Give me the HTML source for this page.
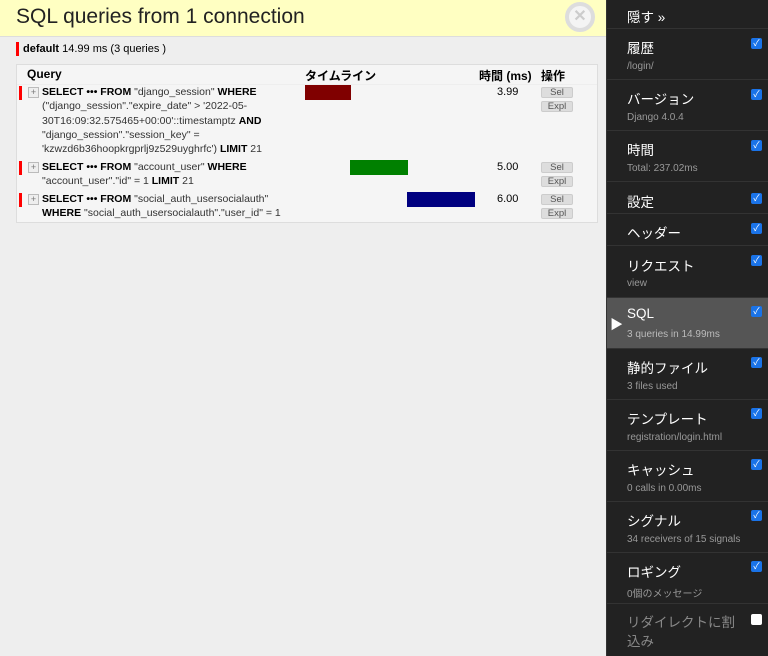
<!DOCTYPE html>
<html><head><meta charset="utf-8"><style>
*{box-sizing:border-box;margin:0;padding:0}
body{width:768px;height:656px;overflow:hidden;background:#eee;font-family:"Liberation Sans","Noto Sans CJK JP",sans-serif;font-size:11px;color:#000;position:relative}
#hd{position:absolute;left:0;top:0;width:606px;height:37px;background:#ffffc2;border-bottom:1px solid #ddd}
#hd h3{position:absolute;left:16px;top:5px;font-size:21px;font-weight:normal;color:#222}
#close{position:absolute;left:565px;top:2px;width:30px;height:30px;border-radius:50%;border:4px solid #ddd;background:#f4f4f4;color:#ccc;font-size:16px;text-align:center;line-height:22px;font-weight:bold}
#db{position:absolute;left:16px;top:42px;font-size:11px;border-left:3px solid red;padding-left:4px;line-height:14px}
#tbl{position:absolute;left:16px;top:64px;width:582px;height:159px;background:#f5f5f5;border:1px solid #ddd}
.th{position:absolute;top:2px;font-weight:bold;font-size:12px}
.q{position:absolute;left:2px;width:270px;line-height:14.3px;font-size:10.5px;color:#333;padding-left:23px}
.q b{color:#000}
.q .bar{position:absolute;left:0;top:1px;width:3px;height:14px;background:red}
.q .pl{position:absolute;left:9px;top:2px;width:11px;height:11px;border:1px solid #bbb;background:#eee;font-size:9px;line-height:9px;text-align:center;color:#777}
.tl{position:absolute;height:15px}
.ms{position:absolute;left:480px;width:24px;font-size:11px}
.btn{position:absolute;left:524px;width:32px;height:11px;background:#ddd;border:1px solid #ccc;border-radius:2px;font-size:9.5px;line-height:9px;text-align:center;color:#555}
#sb{position:absolute;left:606px;top:0;width:162px;height:656px;background:#222;border-left:1px solid #333}
.it{position:absolute;left:0;width:162px;border-bottom:1px solid #333;color:#fff}
.it .t{position:absolute;left:20px;font-size:13.5px}
.it .s{position:absolute;left:20px;font-size:10px;color:#999}
.cb{position:absolute;left:144px;width:11px;height:11px;background:#1a73e8;border-radius:2px;color:#fff;font-size:9px;line-height:11px;text-align:center}
.sel{background:#555}
</style></head><body>
<div id="hd"><h3>SQL queries from 1 connection</h3><div id="close">✕</div></div>
<div id="db"><b>default</b> 14.99 ms (3 queries )</div>
<div id="tbl">
<div class="th" style="left:10px">Query</div>
<div class="th" style="left:288px">タイムライン</div>
<div class="th" style="left:462px">時間 (ms)</div>
<div class="th" style="left:524px">操作</div>
<div style="position:absolute;left:0;top:19px;width:580px;height:1px;background:#eee"></div>
<div class="q" style="top:20px"><span class="bar"></span><span class="pl">+</span><b>SELECT ••• FROM</b> "django_session" <b>WHERE</b> ("django_session"."expire_date" &gt; '2022-05-30T16:09:32.575465+00:00'::timestamptz <b>AND</b> "django_session"."session_key" = 'kzwzd6b36hoopkrgprlj9z529uyghrfc') <b>LIMIT</b> 21</div>
<div class="tl" style="left:288px;top:20px;width:46px;background:#800000"></div>
<div class="ms" style="top:21px">3.99</div>
<div class="btn" style="top:22px">Sel</div><div class="btn" style="top:36px">Expl</div>
<div class="q" style="top:95px"><span class="bar"></span><span class="pl">+</span><b>SELECT ••• FROM</b> "account_user" <b>WHERE</b> "account_user"."id" = 1 <b>LIMIT</b> 21</div>
<div class="tl" style="left:333px;top:95px;width:58px;background:#008000"></div>
<div class="ms" style="top:96px">5.00</div>
<div class="btn" style="top:97px">Sel</div><div class="btn" style="top:111px">Expl</div>
<div class="q" style="top:127px;width:280px"><span class="bar"></span><span class="pl">+</span><b>SELECT ••• FROM</b> "social_auth_usersocialauth" <b>WHERE</b> "social_auth_usersocialauth"."user_id" = 1</div>
<div class="tl" style="left:390px;top:127px;width:68px;background:#000080"></div>
<div class="ms" style="top:128px">6.00</div>
<div class="btn" style="top:129px">Sel</div><div class="btn" style="top:143px">Expl</div>
</div>
<div id="sb">
<div class="it" style="top:0;height:29px"><span class="t" style="top:6px">隠す »</span></div>
<div class="it" style="top:29px;height:51px"><span class="t" style="top:8px">履歴</span><span class="s" style="top:32px">/login/</span><span class="cb" style="top:9px">✓</span></div>
<div class="it" style="top:80px;height:51px"><span class="t" style="top:8px">バージョン</span><span class="s" style="top:32px">Django 4.0.4</span><span class="cb" style="top:9px">✓</span></div>
<div class="it" style="top:131px;height:51px"><span class="t" style="top:8px">時間</span><span class="s" style="top:32px">Total: 237.02ms</span><span class="cb" style="top:9px">✓</span></div>
<div class="it" style="top:182px;height:32px"><span class="t" style="top:9px">設定</span><span class="cb" style="top:11px">✓</span></div>
<div class="it" style="top:214px;height:32px"><span class="t" style="top:8px">ヘッダー</span><span class="cb" style="top:9px">✓</span></div>
<div class="it" style="top:246px;height:52px"><span class="t" style="top:9px">リクエスト</span><span class="s" style="top:32px">view</span><span class="cb" style="top:9px">✓</span></div>
<div class="it sel" style="top:298px;height:51px"><span style="position:absolute;left:3px;top:16px;font-size:13px">▶</span><span class="t" style="top:8px">SQL</span><span class="s" style="top:31px;color:#bbb">3 queries in 14.99ms</span><span class="cb" style="top:8px">✓</span></div>
<div class="it" style="top:349px;height:51px"><span class="t" style="top:8px">静的ファイル</span><span class="s" style="top:32px">3 files used</span><span class="cb" style="top:8px">✓</span></div>
<div class="it" style="top:400px;height:51px"><span class="t" style="top:8px">テンプレート</span><span class="s" style="top:32px">registration/login.html</span><span class="cb" style="top:8px">✓</span></div>
<div class="it" style="top:451px;height:51px"><span class="t" style="top:8px">キャッシュ</span><span class="s" style="top:32px">0 calls in 0.00ms</span><span class="cb" style="top:8px">✓</span></div>
<div class="it" style="top:502px;height:51px"><span class="t" style="top:8px">シグナル</span><span class="s" style="top:32px">34 receivers of 15 signals</span><span class="cb" style="top:8px">✓</span></div>
<div class="it" style="top:553px;height:51px"><span class="t" style="top:8px">ロギング</span><span class="s" style="top:32px">0個のメッセージ</span><span class="cb" style="top:8px">✓</span></div>
<div class="it" style="top:604px;height:52px;border:none"><span class="t" style="top:9px;color:#888;width:120px;line-height:19px">リダイレクトに割込み</span><span class="cb" style="top:10px;background:#fff"></span></div>
</div>
</body></html>
